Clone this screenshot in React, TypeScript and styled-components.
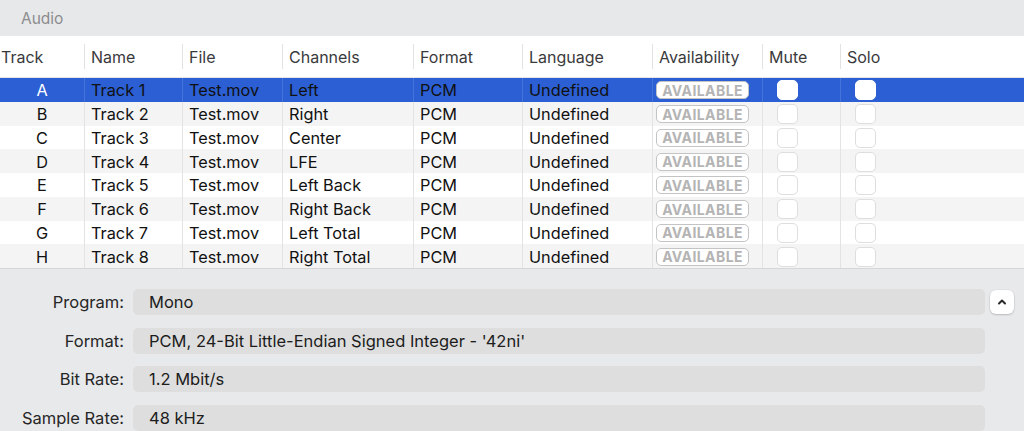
import styled, { createGlobalStyle, css } from "styled-components";

//====================================================================>

interface Track {
    id: string;
    name: string;
    file: string;
    channel: string;
}

const tracks: Track[] = [
    { id: "A", name: "Track 1", file: "Test.mov", channel: "Left" },
    { id: "B", name: "Track 2", file: "Test.mov", channel: "Right" },
    { id: "C", name: "Track 3", file: "Test.mov", channel: "Center" },
    { id: "D", name: "Track 4", file: "Test.mov", channel: "LFE" },
    { id: "E", name: "Track 5", file: "Test.mov", channel: "Left Back" },
    { id: "F", name: "Track 6", file: "Test.mov", channel: "Right Back" },
    { id: "G", name: "Track 7", file: "Test.mov", channel: "Left Total" },
    { id: "H", name: "Track 8", file: "Test.mov", channel: "Right Total" },
];

const details = [
    { label: "Program:", value: "Mono" },
    { label: "Format:", value: "PCM, 24-Bit Little-Endian Signed Integer - '42ni'" },
    { label: "Bit Rate:", value: "1.2 Mbit/s" },
    { label: "Sample Rate:", value: "48 kHz" },
];

const headers = ["Track", "Name", "File", "Channels", "Format", "Language", "Availability", "Mute", "Solo"];

const COLS = "84px 98px 100px 131px 109px 130px 110px 78px 1fr";

//====================================================================>

const GlobalStyle = createGlobalStyle`
    html, body {
        margin: 0;
        padding: 0;
        background: #e8e9eb;
        font-family: Inter, "Liberation Sans", sans-serif;
        -webkit-font-smoothing: antialiased;
    }
    * {
        box-sizing: border-box;
    }
`

const Window = styled.div`
    width: 1024px;
    height: 431px;
    overflow: hidden;
    background: #e8e9eb;
    display: flex;
    flex-direction: column;
`

const TitleBar = styled.div`
    height: 36px;
    flex-shrink: 0;
    display: flex;
    align-items: center;
    padding-left: 21px;
    background: #e7e8ea;
    color: #8c8c8e;
    font-size: 15.5px;
`

const Table = styled.div`
    flex-shrink: 0;
    background: #ffffff;
    border-bottom: 1px solid #d6d6d8;
`

const HeaderRow = styled.div`
    display: grid;
    grid-template-columns: ${COLS};
    height: 42px;
    align-items: center;
    background: #ffffff;
    border-bottom: 1px solid #e4e4e4;
`

const HeaderCell = styled.div<{ $first?: boolean }>`
    height: 25px;
    display: flex;
    align-items: center;
    padding-left: ${p => (p.$first ? "1px" : "6px")};
    border-left: ${p => (p.$first ? "none" : "1px solid #e2e2e2")};
    color: #3a3a3c;
    font-size: 16px;
`

const Row = styled.div<{ $selected?: boolean; $striped?: boolean }>`
    display: grid;
    grid-template-columns: ${COLS};
    height: 23.75px;
    background: ${p => (p.$selected ? "#2b5fd3" : p.$striped ? "#f4f4f5" : "#ffffff")};
`

const Cell = styled.div<{ $center?: boolean; $first?: boolean; $light?: boolean; $selected?: boolean }>`
    display: flex;
    align-items: center;
    justify-content: ${p => (p.$center ? "center" : "flex-start")};
    padding-left: ${p => (p.$center ? "0" : "6px")};
    padding-top: 1px;
    border-left: ${p => (p.$first ? "none" : p.$selected ? "1px solid #4673da" : "1px solid #e3e3e3")};
    color: ${p => (p.$light ? "#ffffff" : "#111111")};
    font-size: 16.3px;
    white-space: nowrap;
`

const BadgeCell = styled(Cell)`
    padding-left: 3px;
`

const CheckCell = styled(Cell)`
    padding-left: 14px;
`

const Badge = styled.span`
    width: 93px;
    height: 18px;
    display: flex;
    align-items: center;
    justify-content: center;
    border: 1.5px solid #c4c4c4;
    border-radius: 5px;
    background: #ffffff;
    color: #b4b4b4;
    font-size: 14px;
    font-weight: 700;
    letter-spacing: 0.4px;
`

const CheckBox = styled.span<{ $selected?: boolean }>`
    width: 21px;
    height: 20px;
    border-radius: 5px;
    background: #ffffff;
    ${p =>
        p.$selected
            ? css`border: 1px solid #ffffff;`
            : css`border: 1px solid #dedede;`}
`

const Details = styled.div`
    flex: 1;
    display: flex;
    flex-direction: column;
    gap: 12.5px;
    padding-top: 20px;
`

const DetailRow = styled.div`
    display: flex;
    align-items: center;
    height: 26px;
    flex-shrink: 0;
`

const Label = styled.div`
    width: 124px;
    text-align: right;
    color: #262626;
    font-size: 16.5px;
    margin-right: 9px;
`

const Field = styled.div`
    width: 852px;
    height: 26px;
    display: flex;
    align-items: center;
    padding-left: 16px;
    border-radius: 5px;
    background: #dedede;
    color: #1c1c1c;
    font-size: 16.5px;
`

const ToggleButton = styled.button`
    width: 24px;
    height: 24px;
    margin-left: 5px;
    padding: 0;
    border: none;
    border-radius: 6px;
    background: #ffffff;
    box-shadow: 0 1px 2px rgba(0, 0, 0, 0.18), 0 0 0 0.5px rgba(0, 0, 0, 0.06);
    display: flex;
    align-items: center;
    justify-content: center;
    cursor: pointer;
`

//====================================================================>

function App() {
    return (
        <Window>
            <GlobalStyle />
            <TitleBar>Audio</TitleBar>

            <Table>
                <HeaderRow>
                    {headers.map((h, i) => (
                        <HeaderCell key={h} $first={i === 0}>{h}</HeaderCell>
                    ))}
                </HeaderRow>

                {tracks.map((t, i) => {
                    const sel = i === 0
                    return (
                        <Row key={t.id} $selected={sel} $striped={i % 2 === 1}>
                            <Cell $first $center $light={sel}>{t.id}</Cell>
                            <Cell $selected={sel}>{t.name}</Cell>
                            <Cell $selected={sel}>{t.file}</Cell>
                            <Cell $selected={sel}>{t.channel}</Cell>
                            <Cell $selected={sel}>PCM</Cell>
                            <Cell $selected={sel}>Undefined</Cell>
                            <BadgeCell $selected={sel}><Badge>AVAILABLE</Badge></BadgeCell>
                            <CheckCell $selected={sel}><CheckBox $selected={sel} /></CheckCell>
                            <CheckCell $selected={sel}><CheckBox $selected={sel} /></CheckCell>
                        </Row>
                    )
                })}
            </Table>

            <Details>
                {details.map((d, i) => (
                    <DetailRow key={d.label}>
                        <Label>{d.label}</Label>
                        <Field>{d.value}</Field>
                        {i === 0 && (
                            <ToggleButton aria-label="Collapse">
                                <svg width="12" height="12" viewBox="0 0 12 12">
                                    <polyline points="3,7.5 6,4.5 9,7.5" fill="none" stroke="#2a2a2a" strokeWidth="2" strokeLinecap="round" strokeLinejoin="round" />
                                </svg>
                            </ToggleButton>
                        )}
                    </DetailRow>
                ))}
            </Details>
        </Window>
    )
}
export default App
